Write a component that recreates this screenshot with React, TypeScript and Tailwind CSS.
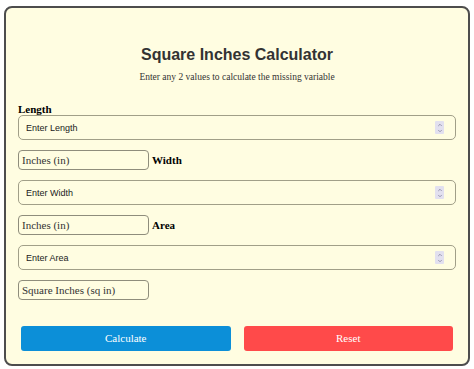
import { ChevronDown, ChevronUp } from 'lucide-react'

function NumberField({ placeholder }: { placeholder: string }) {
  return (
    <div className="relative">
      <input
        type="text"
        placeholder={placeholder}
        className="block w-full h-[25px] rounded-[5px] border border-[#a19f88] bg-[#fffde1] pl-[7px] text-[9px] text-[#333] placeholder:text-[#222] outline-none font-['Liberation_Sans',sans-serif]"
      />
      <div className="absolute right-[12px] top-[6px] w-[9px] h-[13px] bg-[#e2e0ef] rounded-[1px] flex flex-col items-center justify-center text-[#6f6d8c]">
        <ChevronUp size={6} strokeWidth={2.5} />
        <ChevronDown size={6} strokeWidth={2.5} />
      </div>
    </div>
  )
}

function UnitSelect({ value, label }: { value: string; label?: string }) {
  return (
    <div className="flex items-center gap-[3px]">
      <div className="w-[131px] h-[20px] rounded-[4px] border border-[#8f8d7c] bg-[#fffde1] pl-[3px] flex items-center text-[11px] text-[#333] font-['Liberation_Serif',serif]">
        {value}
      </div>
      {label && (
        <span className="text-[11px] font-bold text-black font-['Liberation_Serif',serif]">{label}</span>
      )}
    </div>
  )
}

export default function App() {
  return (
    <div className="w-[474px] h-[369px] bg-white pl-[4px] pt-[6px]">
      <div className="w-[466px] h-[360px] rounded-[8px] border-2 border-[#4d4d4d] bg-[#fffde1] px-[12px] pt-[37px]">
        <h1 className="text-center text-[16px] leading-[20px] font-bold text-[#333] font-['Liberation_Sans',sans-serif]">
          Square Inches Calculator
        </h1>
        <p className="mt-[6px] text-center text-[9.5px] leading-[12px] text-[#333] font-['Liberation_Serif',serif]">
          Enter any 2 values to calculate the missing variable
        </p>

        <div className="mt-[21px] text-[11px] leading-[11px] font-bold text-black font-['Liberation_Serif',serif]">
          Length
        </div>
        <NumberField placeholder="Enter Length" />

        <div className="mt-[10px] flex flex-col gap-[10px]">
          <UnitSelect value="Inches (in)" label="Width" />
          <NumberField placeholder="Enter Width" />
          <UnitSelect value="Inches (in)" label="Area" />
          <NumberField placeholder="Enter Area" />
          <UnitSelect value="Square Inches (sq in)" />
        </div>

        <div className="mt-[26px] px-[3px] flex gap-[13px]">
          <button className="flex-1 h-[25px] rounded-[3px] bg-[#0c8fd8] text-white text-[11px] font-['Liberation_Serif',serif]">
            Calculate
          </button>
          <button className="flex-1 h-[25px] rounded-[3px] bg-[#ff4a4a] text-white text-[11px] font-['Liberation_Serif',serif]">
            Reset
          </button>
        </div>
      </div>
    </div>
  )
}
